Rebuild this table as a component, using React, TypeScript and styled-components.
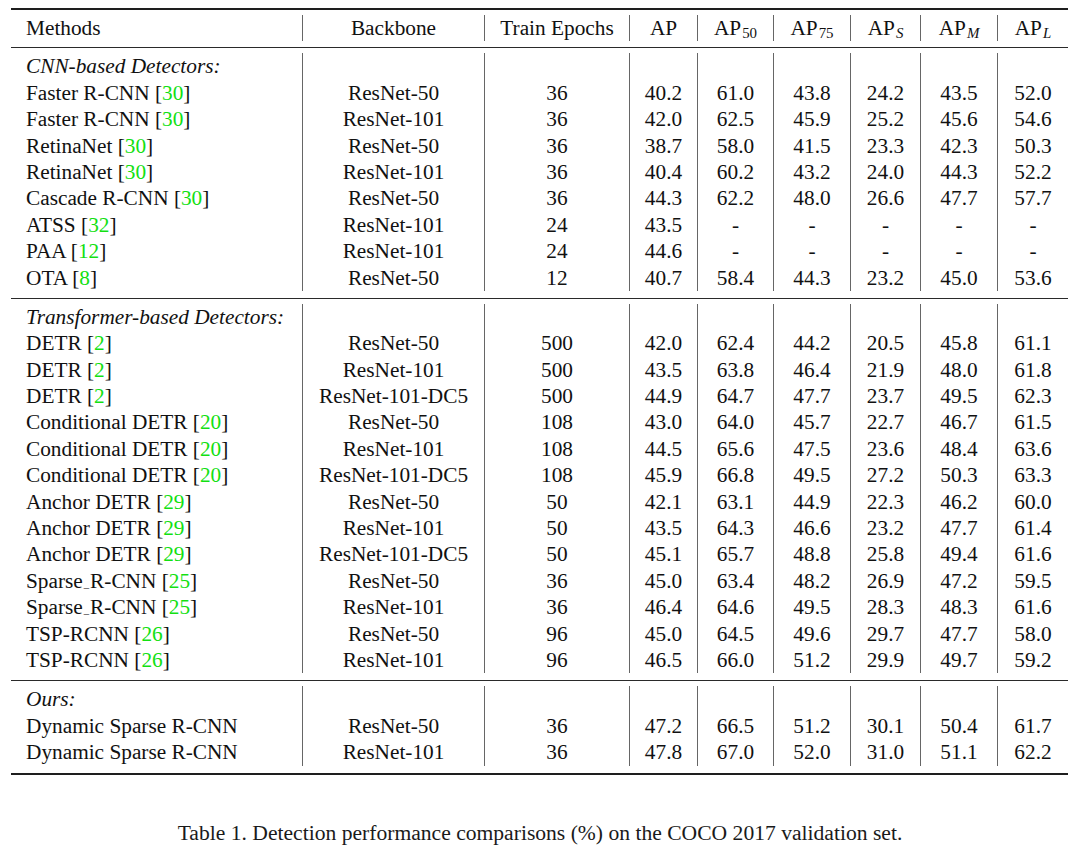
import React from 'react'
import styled, { createGlobalStyle } from 'styled-components'

type Row = string[]

const sections: { title: string; rows: Row[] }[] = [
  {
    title: 'CNN-based Detectors:',
    rows: [
      ['Faster R-CNN', '30', 'ResNet-50', '36', '40.2', '61.0', '43.8', '24.2', '43.5', '52.0'],
      ['Faster R-CNN', '30', 'ResNet-101', '36', '42.0', '62.5', '45.9', '25.2', '45.6', '54.6'],
      ['RetinaNet', '30', 'ResNet-50', '36', '38.7', '58.0', '41.5', '23.3', '42.3', '50.3'],
      ['RetinaNet', '30', 'ResNet-101', '36', '40.4', '60.2', '43.2', '24.0', '44.3', '52.2'],
      ['Cascade R-CNN', '30', 'ResNet-50', '36', '44.3', '62.2', '48.0', '26.6', '47.7', '57.7'],
      ['ATSS', '32', 'ResNet-101', '24', '43.5', '-', '-', '-', '-', '-'],
      ['PAA', '12', 'ResNet-101', '24', '44.6', '-', '-', '-', '-', '-'],
      ['OTA', '8', 'ResNet-50', '12', '40.7', '58.4', '44.3', '23.2', '45.0', '53.6'],
    ],
  },
  {
    title: 'Transformer-based Detectors:',
    rows: [
      ['DETR', '2', 'ResNet-50', '500', '42.0', '62.4', '44.2', '20.5', '45.8', '61.1'],
      ['DETR', '2', 'ResNet-101', '500', '43.5', '63.8', '46.4', '21.9', '48.0', '61.8'],
      ['DETR', '2', 'ResNet-101-DC5', '500', '44.9', '64.7', '47.7', '23.7', '49.5', '62.3'],
      ['Conditional DETR', '20', 'ResNet-50', '108', '43.0', '64.0', '45.7', '22.7', '46.7', '61.5'],
      ['Conditional DETR', '20', 'ResNet-101', '108', '44.5', '65.6', '47.5', '23.6', '48.4', '63.6'],
      ['Conditional DETR', '20', 'ResNet-101-DC5', '108', '45.9', '66.8', '49.5', '27.2', '50.3', '63.3'],
      ['Anchor DETR', '29', 'ResNet-50', '50', '42.1', '63.1', '44.9', '22.3', '46.2', '60.0'],
      ['Anchor DETR', '29', 'ResNet-101', '50', '43.5', '64.3', '46.6', '23.2', '47.7', '61.4'],
      ['Anchor DETR', '29', 'ResNet-101-DC5', '50', '45.1', '65.7', '48.8', '25.8', '49.4', '61.6'],
      ['Sparse_R-CNN', '25', 'ResNet-50', '36', '45.0', '63.4', '48.2', '26.9', '47.2', '59.5'],
      ['Sparse_R-CNN', '25', 'ResNet-101', '36', '46.4', '64.6', '49.5', '28.3', '48.3', '61.6'],
      ['TSP-RCNN', '26', 'ResNet-50', '96', '45.0', '64.5', '49.6', '29.7', '47.7', '58.0'],
      ['TSP-RCNN', '26', 'ResNet-101', '96', '46.5', '66.0', '51.2', '29.9', '49.7', '59.2'],
    ],
  },
  {
    title: 'Ours:',
    rows: [
      ['Dynamic Sparse R-CNN', '', 'ResNet-50', '36', '47.2', '66.5', '51.2', '30.1', '50.4', '61.7'],
      ['Dynamic Sparse R-CNN', '', 'ResNet-101', '36', '47.8', '67.0', '52.0', '31.0', '51.1', '62.2'],
    ],
  },
]

const MethodName: React.FC<{ name: string; cite: string }> = ({ name, cite }) => {
  const parts = name.split('_')
  return (
    <>
      {parts.map((p, i) => (
        <React.Fragment key={i}>
          {i > 0 && <Underscore>_</Underscore>}
          {p}
        </React.Fragment>
      ))}
      {cite && (
        <>
          {' '}[<Cite>{cite}</Cite>]
        </>
      )}
    </>
  )
}

const App = () => {
  return (
    <>
      <GlobalStyle />
      <Page>
        <Table>
          <ThickRule />
          <Section $top={5} $bottom={6}>
            <GridRow>
              <Cell $first>Methods</Cell>
              <Cell>Backbone</Cell>
              <Cell>Train Epochs</Cell>
              <Cell>AP</Cell>
              <Cell>
                AP<Sub>50</Sub>
              </Cell>
              <Cell>
                AP<Sub>75</Sub>
              </Cell>
              <Cell>
                AP<Sub $math>S</Sub>
              </Cell>
              <Cell>
                AP<Sub $math>M</Sub>
              </Cell>
              <Cell>
                AP<Sub $math>L</Sub>
              </Cell>
            </GridRow>
          </Section>
          {sections.map((s, si) => (
            <React.Fragment key={s.title}>
              <MidRule />
              <Section $top={5} $bottom={7}>
                <GridRow>
                  <Cell $first>
                    <Heading>{s.title}</Heading>
                  </Cell>
                  {Array.from({ length: 8 }).map((_, i) => (
                    <Cell key={i} />
                  ))}
                </GridRow>
                {s.rows.map((r, ri) => (
                  <GridRow key={si + '-' + ri}>
                    <Cell $first>
                      <MethodName name={r[0]} cite={r[1]} />
                    </Cell>
                    {r.slice(2).map((v, ci) => (
                      <Cell key={ci}>{v}</Cell>
                    ))}
                  </GridRow>
                ))}
              </Section>
            </React.Fragment>
          ))}
          <ThickRule />
        </Table>
        <Caption>Table 1. Detection performance comparisons (%) on the COCO 2017 validation set.</Caption>
      </Page>
    </>
  )
}

export default App

const GlobalStyle = createGlobalStyle`
  html, body {
    margin: 0;
    padding: 0;
    background: #ffffff;
  }
  body {
    font-family: "Liberation Serif", "Times New Roman", serif;
    color: #111111;
  }
`

const Page = styled.div`
  width: 1080px;
  height: 851px;
  padding-top: 8px;
  box-sizing: border-box;
  background: #ffffff;
`

const Table = styled.div`
  margin-left: 11px;
  width: 1057px;
  font-size: 21.3px;
`

const ThickRule = styled.div`
  height: 2px;
  background: #1e1e1e;
`

const MidRule = styled.div`
  height: 1px;
  background: #2a2a2a;
`

const Section = styled.div<{ $top: number; $bottom: number }>`
  padding-top: ${(p) => p.$top}px;
  padding-bottom: ${(p) => p.$bottom}px;
`

const GridRow = styled.div`
  display: grid;
  grid-template-columns: 291px 182px 145px 68px 76px 77px 70px 77px 71px;
  height: 26.4px;
  line-height: 26.4px;
`

const Cell = styled.div<{ $first?: boolean }>`
  text-align: ${(p) => (p.$first ? 'left' : 'center')};
  padding-left: ${(p) => (p.$first ? '15px' : '0')};
  border-left: ${(p) => (p.$first ? 'none' : '1px solid #666666')};
  white-space: nowrap;
`

const Heading = styled.span`
  font-style: italic;
`

const Cite = styled.span`
  color: #12e012;
`

const Underscore = styled.span`
  font-size: 0.5em;
  vertical-align: 0.1em;
  margin: 0 1px;
`

const Sub = styled.sub<{ $math?: boolean }>`
  font-size: 0.7em;
  font-style: ${(p) => (p.$math ? 'italic' : 'normal')};
  vertical-align: -0.22em;
  line-height: 0;
  margin-left: 1px;
`

const Caption = styled.div`
  margin-top: 45px;
  text-align: center;
  font-size: 21.6px;
  line-height: 26px;
  color: #1a1a1a;
`
